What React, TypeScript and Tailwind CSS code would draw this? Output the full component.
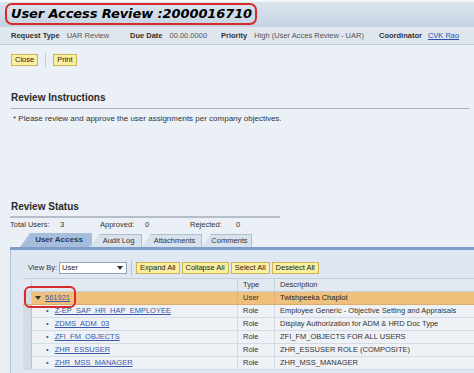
const info = [
  { label: "Request Type", value: "UAR Review", w: "w-[119px]" },
  { label: "Due Date", value: "00.00.0000", w: "w-[91px]" },
  { label: "Priority", value: "High (User Acces Review - UAR)", w: "w-[158px]" },
];

const roles = [
  { id: "Z-EP_SAP_HR_HAP_EMPLOYEE", desc: "Employee Generic - Objective Setting and Appraisals" },
  { id: "ZDMS_ADM_03", desc: "Display Authorization for ADM & HRD Doc Type" },
  { id: "ZFI_FM_OBJECTS", desc: "ZFI_FM_OBJECTS FOR ALL USERS" },
  { id: "ZHR_ESSUSER", desc: "ZHR_ESSUSER ROLE (COMPOSITE)" },
  { id: "ZHR_MSS_MANAGER", desc: "ZHR_MSS_MANAGER" },
];

function YellowButton({ label }: { label: string }) {
  return (
    <button className="h-[12px] px-[3px] bg-[#fbee9e] border border-[#c9b45a] text-[7.5px] leading-[10px] text-[#222] whitespace-nowrap">
      {label}
    </button>
  );
}

export default function App() {
  return (
    <div className="w-[474px] h-[373px] overflow-hidden bg-[#ebf0f6] text-[8px] text-[#333] font-['Liberation_Sans',Arial,sans-serif]">
      {/* Title bar */}
      <div className="h-[27px] border-t-2 border-[#f4f7fa] bg-gradient-to-b from-[#dbe4ee] to-[#c5d3e2] pl-[5px] pt-[1px]">
        <div className="inline-flex items-center h-[22px] pl-[4px] pr-[3px] border-2 border-[#d62b2b] rounded-[7px] whitespace-nowrap">
          <span className="font-['DejaVu_Sans',Verdana,sans-serif] font-bold italic text-[13px] tracking-[-0.1px] text-black">
            User Access Review :2000016710
          </span>
        </div>
      </div>

      {/* Header info */}
      <div className="h-[18px] flex items-center pl-[11px] bg-[#dfe6ee] border-b border-[#c3ccd6] text-[7.5px] whitespace-nowrap">
        {info.map((it) => (
          <div key={it.label} className={`flex items-center shrink-0 ${it.w}`}>
            <span className="font-bold text-[#333] mr-[7px]">{it.label}</span>
            <span className="text-[#555]">{it.value}</span>
          </div>
        ))}
        <span className="font-bold text-[#333] mr-[6px]">Coordinator</span>
        <span className="text-[#2b4fa8] underline">CVK Rao</span>
      </div>

      {/* Buttons */}
      <div className="h-[28px] flex items-center pl-[11px] gap-[4px] pt-[2px]">
        <YellowButton label="Close" />
        <div className="w-px h-[14px] bg-[#c2ccd7] mx-[3px]" />
        <YellowButton label="Print" />
      </div>

      {/* Review Instructions */}
      <div className="pl-[10px] pr-[4px] mt-[17px]">
        <div className="text-[10px] font-bold text-[#2a2a2a] pb-[3px] border-b border-[#a9b4c0] pl-px">
          Review Instructions
        </div>
        <div className="pl-[3px] pt-[4px] text-[#333]">
          * Please review and approve the user assignments per company objectives.
        </div>
      </div>

      {/* Review Status */}
      <div className="pl-[10px] mt-[74px] text-[7.5px]">
        <div className="w-[270px] text-[10px] font-bold text-[#2a2a2a] pb-[2px] border-b-2 border-[#b5bec8] pl-px">
          Review Status
        </div>
        <div className="flex items-center h-[13px] text-[#333]">
          <span className="w-[50px]">Total Users:</span>
          <span className="w-[40px]">3</span>
          <span className="w-[45px]">Approved:</span>
          <span className="w-[45px]">0</span>
          <span className="w-[46px]">Rejected:</span>
          <span>0</span>
        </div>
      </div>

      {/* Tabs */}
      <div className="ml-[10px] mt-[3px] h-[16px] flex items-end pl-[10px] border-b-[3px] border-[#7d9cc7] text-[7.5px]">
        <div className="h-[14px] w-[72px] bg-[#a6bedc] [clip-path:polygon(14%_0,100%_0,100%_100%,0_100%)] flex items-center justify-center pl-[6px] font-bold text-[#1d3a66] text-[8px]">
          User Access
        </div>
        <div className="h-[13px] w-[52px] -ml-[2px] bg-[#d8e2ed] border-t border-r border-[#aebfd3] [clip-path:polygon(18%_0,100%_0,100%_100%,0_100%)] flex items-center justify-center pl-[6px] text-[#333]">
          Audit Log
        </div>
        <div className="h-[13px] w-[60px] bg-[#d8e2ed] border-t border-r border-[#aebfd3] [clip-path:polygon(15%_0,100%_0,100%_100%,0_100%)] flex items-center justify-center pl-[6px] text-[#333]">
          Attachments
        </div>
        <div className="h-[13px] w-[50px] bg-[#d8e2ed] border-t border-r border-[#aebfd3] [clip-path:polygon(18%_0,100%_0,100%_100%,0_100%)] flex items-center justify-center pl-[6px] text-[#333]">
          Comments
        </div>
      </div>

      {/* Panel */}
      <div className="ml-[10px] bg-[#dfe8f2] border-l border-[#b4c4d8] pl-[12px] pt-[10px] h-[200px] text-[7.5px]">
        <div className="flex items-center h-[15px] pl-[5px] gap-[2px]">
          <span className="text-[#333]">View By:</span>
          <div className="w-[68px] h-[12px] bg-white border border-[#8ea2b8] flex items-center justify-between pl-[2px] pr-[3px]">
            <span className="text-[#222]">User</span>
            <span className="w-0 h-0 border-l-[3px] border-r-[3px] border-t-[4px] border-l-transparent border-r-transparent border-t-[#333]" />
          </div>
          <div className="w-px h-[14px] bg-[#b8c3cf] mx-[2px]" />
          <YellowButton label="Expand All" />
          <YellowButton label="Collapse All" />
          <YellowButton label="Select All" />
          <YellowButton label="Deselect All" />
        </div>

        {/* Table */}
        <div className="mt-[3px] border-t border-[#c5cfda]">
          <div className="flex h-[13px] bg-[#e2e9f1] border-b border-[#c5cfda]">
            <div className="w-[9px] border-r border-[#c5cfda]" />
            <div className="w-[206px] border-r border-[#c5cfda]" />
            <div className="w-[37px] border-r border-[#c5cfda] pl-[5px] flex items-center">Type</div>
            <div className="flex-1 pl-[5px] flex items-center">Description</div>
          </div>

          <div className="flex h-[13px] bg-[#efc07b] border-b border-[#d9ae6c]">
            <div className="w-[9px] bg-[#d5dbe2] border-r border-[#c5cfda]" />
            <div className="w-[206px] border-r border-[#e2b56f] flex items-center relative">
              <span className="w-0 h-0 ml-[3px] mr-[4px] border-l-[3px] border-r-[3px] border-t-[4px] border-l-transparent border-r-transparent border-t-[#333]" />
              <span className="text-[#3a57a8] underline">561921</span>
              <div className="absolute -left-[8px] -top-[6px] w-[52px] h-[22px] border-2 border-[#d62b2b] rounded-[6px]" />
            </div>
            <div className="w-[37px] border-r border-[#e2b56f] pl-[5px] flex items-center text-[#333]">User</div>
            <div className="flex-1 pl-[5px] flex items-center text-[#222]">Twishpeeka Chaplot</div>
          </div>

          {roles.map((r) => (
            <div key={r.id} className="flex h-[13px] bg-[#eef2f7] border-b border-[#d3dbe4]">
              <div className="w-[9px] bg-[#d5dbe2] border-r border-[#b9c3ce]" />
              <div className="w-[206px] border-r border-[#d3dbe4] flex items-center pl-[14px]">
                <span className="text-[#3a57a8] mr-[6px]">•</span>
                <span className="text-[#3a57a8] underline">{r.id}</span>
              </div>
              <div className="w-[37px] border-r border-[#d3dbe4] pl-[5px] flex items-center text-[#333]">Role</div>
              <div className="flex-1 pl-[5px] flex items-center text-[#333]">{r.desc}</div>
            </div>
          ))}
        </div>
      </div>
    </div>
  );
}
